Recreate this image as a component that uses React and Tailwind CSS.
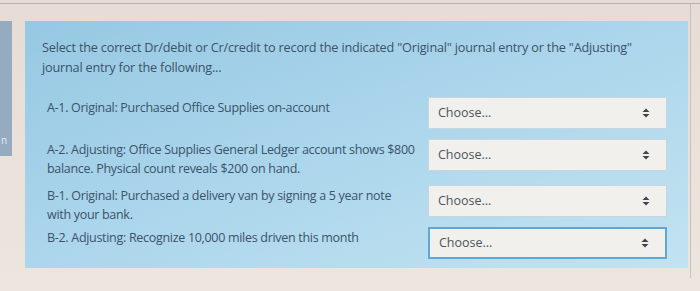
const items = [
  { id: 'a1', h: 'h-[42px]', lines: ['A-1. Original: Purchased Office Supplies on-account'] },
  { id: 'a2', h: 'h-[46px]', lines: ['A-2. Adjusting: Office Supplies General Ledger account shows $800', 'balance. Physical count reveals $200 on hand.'] },
  { id: 'b1', h: 'h-[42px]', lines: ['B-1. Original: Purchased a delivery van by signing a 5 year note', 'with your bank.'] },
  { id: 'b2', h: 'h-[32px]', lines: ['B-2. Adjusting: Recognize 10,000 miles driven this month'], focused: true },
];

function Arrows() {
  return (
    <svg width="8" height="10" viewBox="0 0 8 10" className="text-[#3c4550]">
      <path d="M4 0.5 L7.5 4 H0.5 Z" fill="currentColor" />
      <path d="M4 9.5 L7.5 6 H0.5 Z" fill="currentColor" />
    </svg>
  );
}

export default function App() {
  return (
    <div
      className="w-[700px] h-[291px] overflow-hidden bg-gradient-to-b from-[#e6dcd5] to-[#ece6df] text-[#3a5369]"
      style={{ fontFamily: '"Open Sans", "Noto Sans", sans-serif' }}
    >
      <div className="h-[4px] border-b border-[#b8b2b0]" />
      <div className="flex pt-[17px]">
        <div className="w-[12px] h-[135px] bg-[#95abc0] text-[#e6ecf2] text-[10px] flex items-end pb-[8px] pl-[1px] shrink-0">n</div>
        <div className="ml-[13px] w-[663px] h-[247px] bg-gradient-to-br from-[#96c8e3] via-[#acd6ec] to-[#c2e3f0] pl-[17px] pr-[21px] pt-[16px]">
          <p className="text-[12.7px] leading-[20px] tracking-[-0.2px]">
            Select the correct Dr/debit or Cr/credit to record the indicated "Original" journal entry or the "Adjusting"
            <br />
            journal entry for the following...
          </p>
          <div className="mt-[20px] flex flex-col">
            {items.map((it) => (
              <div key={it.id} className={`flex items-start ${it.h}`}>
                <div className="w-[386px] pl-[5px] pt-[1px] text-[12.5px] leading-[19px] tracking-[-0.3px]">
                  {it.lines.map((l) => (
                    <div key={l}>{l}</div>
                  ))}
                </div>
                <div
                  className={`w-[239px] h-[32px] flex items-center justify-between pl-[9px] pr-[16px] bg-[#f2f0ec] text-[12.5px] text-[#4a5560] ${
                    it.focused ? 'border-2 border-[#5ea8d8]' : 'border border-[#c7d6de]'
                  }`}
                >
                  <span>Choose...</span>
                  <Arrows />
                </div>
              </div>
            ))}
          </div>
        </div>
        <div className="ml-[2px] w-[1px] h-[274px] -mt-[17px] bg-[#c8c0bb]" />
      </div>
    </div>
  );
}
